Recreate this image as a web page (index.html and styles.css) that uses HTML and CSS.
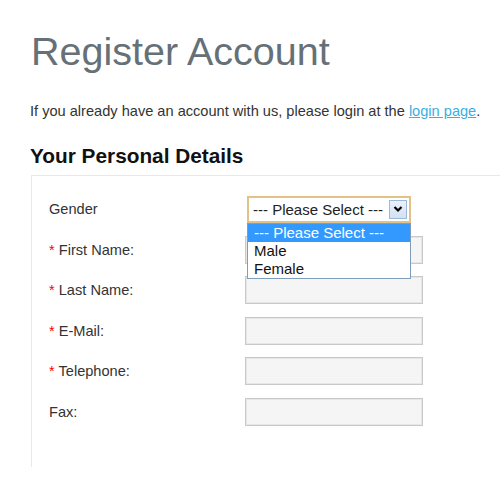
FILE: index.html
```html
<!DOCTYPE html>
<html>
<head>
<meta charset="utf-8">
<link rel="stylesheet" href="styles.css">
</head>
<body>
<div class="page">
  <h1 class="title">Register Account</h1>
  <p class="intro">If you already have an account with us, please login at the <a href="#" class="link">login page</a>.</p>
  <h2 class="section">Your Personal Details</h2>
  <div class="box">
    <div class="form">
      <div class="row">
        <span class="label">Gender</span>
        <div class="select-wrap">
          <div class="select">
            <span class="select-text">--- Please Select ---</span>
            <span class="select-btn">
              <svg width="10" height="8" viewBox="0 0 10 8"><polyline points="1.5,2 5,5.5 8.5,2" fill="none" stroke="#000" stroke-width="2.2"/></svg>
            </span>
          </div>
          <div class="dropdown">
            <div class="option selected">--- Please Select ---</div>
            <div class="option">Male</div>
            <div class="option">Female</div>
          </div>
        </div>
      </div>
      <div class="row">
        <span class="label"><span class="req">*</span> First Name:</span>
        <span class="input"></span>
      </div>
      <div class="row">
        <span class="label"><span class="req">*</span> Last Name:</span>
        <span class="input"></span>
      </div>
      <div class="row">
        <span class="label"><span class="req">*</span> E-Mail:</span>
        <span class="input"></span>
      </div>
      <div class="row">
        <span class="label"><span class="req">*</span> Telephone:</span>
        <span class="input"></span>
      </div>
      <div class="row">
        <span class="label">Fax:</span>
        <span class="input"></span>
      </div>
    </div>
  </div>
</div>
</body>
</html>
```

FILE: styles.css
```css
html, body {
  margin: 0;
  padding: 0;
  background: #fff;
  overflow: hidden;
}
body {
  font-family: "Liberation Sans", Arial, sans-serif;
  color: #333;
}
.page {
  padding: 28px 0 0 30px;
}
.title {
  margin: 0 0 0 1px;
  font-size: 39.5px;
  line-height: 46.8px;
  font-weight: normal;
  color: #667077;
}
.intro {
  margin: 27px 0 0 0;
  font-size: 14.6px;
  line-height: 18px;
  color: #333;
}
.link {
  color: #38b0e3;
  text-decoration: underline;
}
.section {
  margin: 24px 0 0 0;
  font-size: 20.8px;
  line-height: 24px;
  font-weight: bold;
  color: #111;
}
.box {
  margin: 7px 0 0 1px;
  border-top: 1px solid #e8e8e8;
  border-left: 1px solid #e8e8e8;
  padding: 13px 0 35px 17px;
}
.form {
  display: grid;
  grid-template-columns: 196px 178px;
  grid-auto-rows: 40.6px;
  align-items: center;
}
.row {
  display: contents;
}
.label {
  font-size: 14.6px;
  color: #333;
}
.req {
  color: #f00;
}
.input {
  display: block;
  height: 28px;
  box-sizing: border-box;
  border: 1px solid #c9c9c9;
  box-shadow: inset 0 0 0 1px #e6e6e6;
  background: #f5f5f5;
}
.select-wrap {
  position: relative;
  margin-left: 2px;
  width: 164px;
  z-index: 2;
}
.select {
  box-sizing: border-box;
  height: 27px;
  border: 2px solid #e2c286;
  background: #fff;
  display: flex;
  align-items: center;
  justify-content: space-between;
  padding: 0 2px 0 4px;
}
.select-text {
  font-size: 15px;
  color: #222;
}
.select-btn {
  box-sizing: border-box;
  width: 18px;
  height: 19px;
  border: 1px solid #9fb7d8;
  background: linear-gradient(#e9f1fb, #d3e1f3);
  display: flex;
  align-items: center;
  justify-content: center;
}
.dropdown {
  position: absolute;
  left: 0;
  top: 27px;
  width: 164px;
  box-sizing: border-box;
  border: 1px solid #7f9db9;
  background: #fff;
}
.option {
  height: 18px;
  line-height: 18px;
  font-size: 15px;
  padding-left: 6px;
  color: #111;
}
.option.selected {
  background: #3399ff;
  color: #fff;
}
```
